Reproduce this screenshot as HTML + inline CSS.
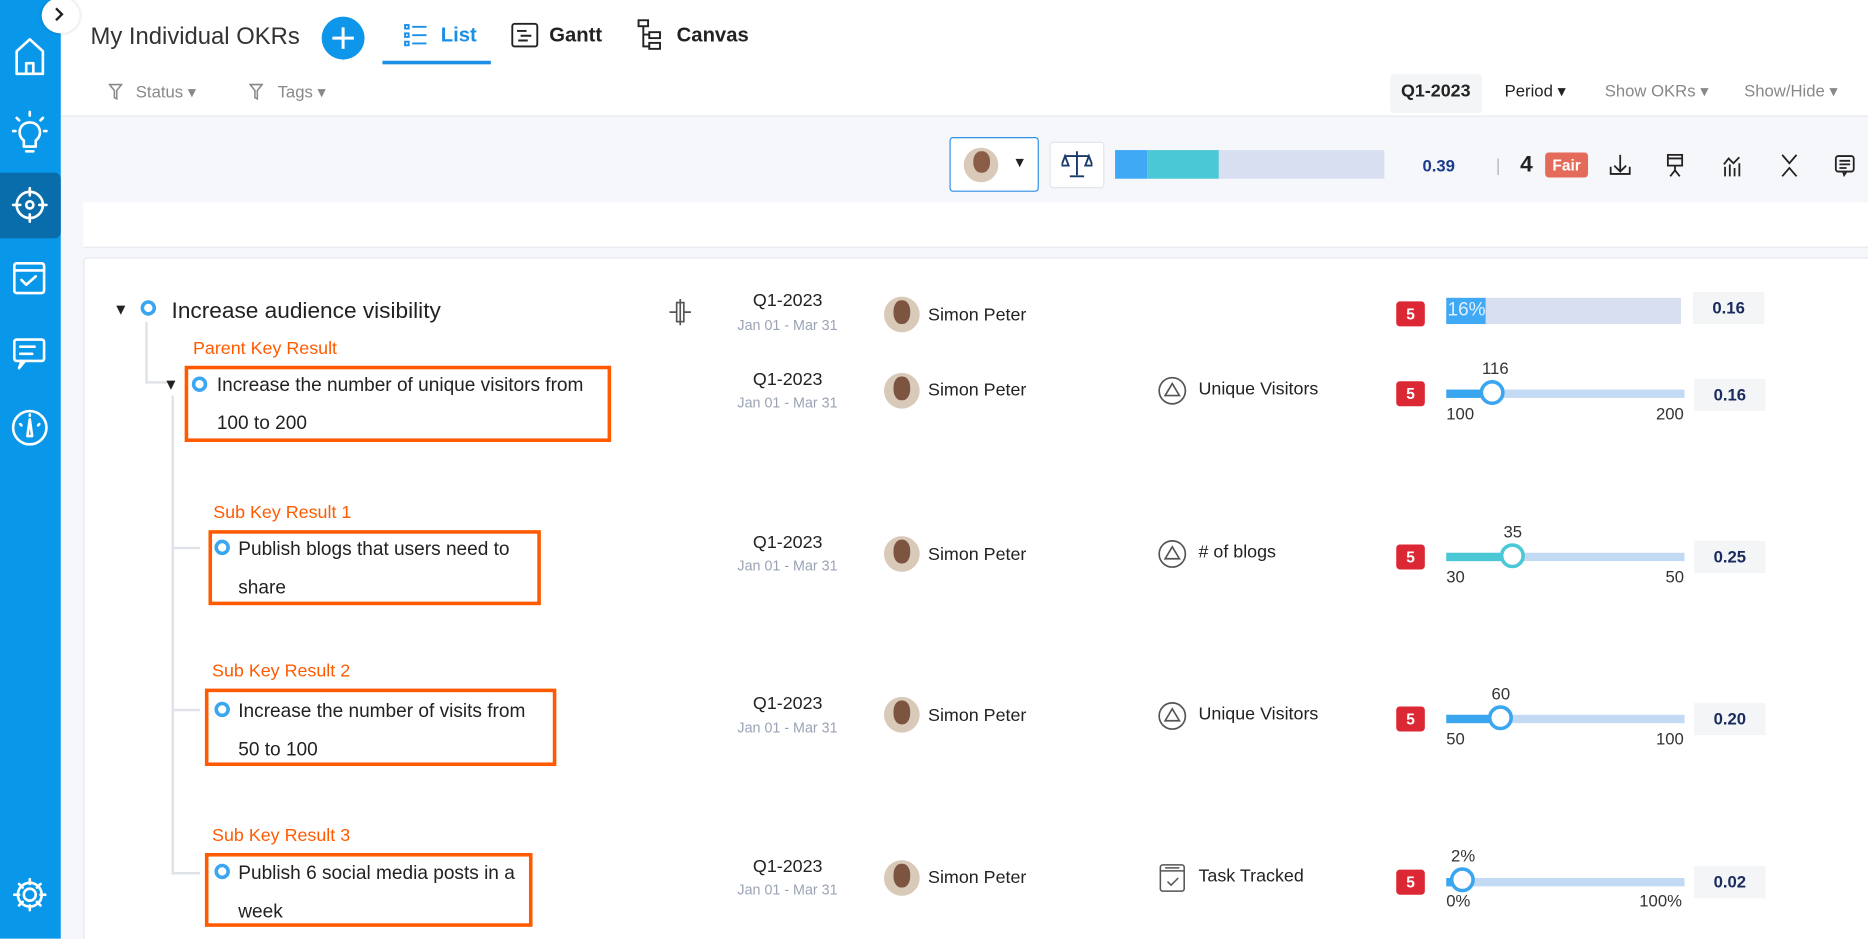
<!DOCTYPE html>
<html><head><meta charset="utf-8">
<style>
*{margin:0;padding:0;box-sizing:border-box}
html,body{width:1868px;height:939px;overflow:hidden;background:#fff}
#s{position:absolute;left:0;top:0;width:1568px;height:788px;transform:scale(1.19133);transform-origin:0 0;font-family:"Liberation Sans",sans-serif;color:#222;background:#f6f7fa;overflow:hidden}
.a{position:absolute}
.sb{left:0;top:0;width:51px;height:788px;background:#0897e9}
.t{white-space:nowrap}
.q{font-size:15px;color:#222}
.d{font-size:12px;color:#9aa3b5}
.nm{font-size:15px;color:#222}
.b5{width:24px;height:21px;background:#dc2834;border-radius:3px;color:#fff;font-weight:bold;font-size:13px;text-align:center;line-height:21px}
.vb{width:60px;height:27px;background:#f4f5f7;font-weight:bold;font-size:14px;color:#1a2b5e;text-align:center;line-height:27px}
.lbl{font-size:15px;color:#ff5a00}
.box{border:3px solid #ff5a00}
.kt{font-size:16px;color:#222}
.dot{width:13px;height:13px;border-radius:50%;border:3.5px solid #3aa6f0;background:#fff}
.trk{height:7px;background:#c2daf3}
.sm{font-size:14px;color:#333}
</style></head><body><div id="s">
<div class="a" style="left:51px;top:0;width:1517px;height:98px;background:#fff;border-bottom:1px solid #e4e7ee"></div>
<div class="a sb"></div>
<div class="a" style="left:0;top:145px;width:51px;height:55px;background:#0a6dab;border-radius:0 5px 5px 0"></div>
<div class="a" style="left:35px;top:-2px;width:32px;height:30px;border-radius:50%;background:#fff;box-shadow:0 0 3px rgba(0,0,0,.2)"></div>
<svg class="a" style="left:44px;top:5px" width="12" height="14"><path d="M3 2l5 5-5 5" stroke="#222" stroke-width="2" fill="none"/></svg>
<svg class="a" style="left:0;top:0" width="51" height="788" fill="none" stroke="#fff" stroke-width="2.2" stroke-linecap="round" stroke-linejoin="round">
<path d="M14 43l11-10 11 10v19H14z M22 62v-9h6v9"/>
<path d="M25 97v-3 M16 101l-2-2 M34 101l2-2 M13 110h-2 M37 110h2 M20 118c-4-3-5-9-1-13 3-3 9-3 12 0 4 4 3 10-1 13v5h-10z M22 127h6"/>
<circle cx="25" cy="172" r="11"/><circle cx="25" cy="172" r="3"/><path d="M25 158v6 M25 180v6 M11 172h6 M33 172h6"/>
<rect x="12" y="221" width="25" height="25" rx="2"/><path d="M12 227h25 M18 235l4 4 8-7"/>
<rect x="12" y="285" width="25" height="18" rx="2"/><path d="M17 291h12 M17 297h10 M18 303l-2 6 5-6"/>
<circle cx="25" cy="359" r="14"/><path d="M25 352l-2 14h4z M17 356l1 1 M33 356l-1 1 M25 348v1"/>
<circle cx="25" cy="751" r="5"/><path d="M25 738v4 M25 760v4 M12 751h4 M34 751h4 M16 742l3 3 M31 757l3 3 M34 742l-3 3 M16 760l3-3"/><circle cx="25" cy="751" r="10"/>
</svg>
<div class="a t" style="left:76px;top:20px;font-size:20px;color:#333">My Individual OKRs</div>
<div class="a" style="left:270px;top:14px;width:36px;height:36px;border-radius:50%;background:#0d96ea"></div>
<svg class="a" style="left:270px;top:14px" width="36" height="36"><path d="M18 9v18M9 18h18" stroke="#fff" stroke-width="2.5"/></svg>
<svg class="a" style="left:338px;top:19px" width="22" height="20" fill="none" stroke="#1b8fe6" stroke-width="1.6"><rect x="2" y="2" width="3" height="3"/><rect x="2" y="9" width="3" height="3"/><rect x="2" y="16" width="3" height="3"/><path d="M8 3.5h12M8 10.5h12M8 17.5h12"/></svg>
<div class="a t" style="left:370px;top:20px;font-size:17px;color:#1b8fe6;font-weight:bold">List</div>
<div class="a" style="left:321px;top:51px;width:91px;height:3px;background:#1b8fe6"></div>
<svg class="a" style="left:429px;top:19px" width="24" height="22" fill="none" stroke="#222" stroke-width="1.6"><rect x="1" y="1" width="21" height="19" rx="2"/><path d="M5 7h8M8 11h9M6 15h8"/></svg>
<div class="a t" style="left:461px;top:20px;font-size:17px;font-weight:bold;color:#222">Gantt</div>
<svg class="a" style="left:535px;top:16px" width="24" height="27" fill="none" stroke="#222" stroke-width="1.6"><rect x="1" y="1" width="8" height="5"/><rect x="10" y="11" width="9" height="5"/><rect x="10" y="20" width="9" height="5"/><path d="M5 6v17h5M5 13h5"/></svg>
<div class="a t" style="left:568px;top:20px;font-size:17px;font-weight:bold;color:#222">Canvas</div>
<svg class="a" style="left:91px;top:70px" width="12" height="14" fill="none" stroke="#888" stroke-width="1.3"><path d="M1 1h10L7 6v7L5 12V6z"/></svg>
<div class="a t" style="left:114px;top:69px;font-size:14px;color:#888">Status ▾</div>
<svg class="a" style="left:209px;top:70px" width="12" height="14" fill="none" stroke="#888" stroke-width="1.3"><path d="M1 1h10L7 6v7L5 12V6z"/></svg>
<div class="a t" style="left:233px;top:69px;font-size:14px;color:#888">Tags ▾</div>
<div class="a" style="left:1167px;top:62px;width:77px;height:33px;background:#f4f5f7;border-radius:3px"></div>
<div class="a t" style="left:1176px;top:68px;font-size:15px;font-weight:bold;color:#222">Q1-2023</div>
<div class="a t" style="left:1263px;top:68px;font-size:14px;color:#222">Period ▾</div>
<div class="a t" style="left:1347px;top:68px;font-size:14px;color:#888">Show OKRs ▾</div>
<div class="a t" style="left:1464px;top:68px;font-size:14px;color:#888">Show/Hide ▾</div>
<div class="a" style="left:70px;top:170px;width:1498px;height:38px;background:#fff;border-bottom:1px solid #e4e7ee"></div>
<div class="a" style="left:797px;top:115px;width:75px;height:46px;border:1px solid #2d8fe6;border-radius:3px;background:#fff"></div>
<div class="a" style="left:809px;top:124px;width:29px;height:29px;border-radius:50%;background:#d9c9b8"></div>
<div class="a" style="left:817px;top:127px;width:14px;height:18px;border-radius:45%;background:#8a5e46"></div>
<div class="a t" style="left:850px;top:129px;font-size:12px">▼</div>
<div class="a" style="left:881px;top:119px;width:46px;height:39px;border:1px solid #e2e5ec;border-radius:3px;background:#fff"></div>
<svg class="a" style="left:891px;top:125px" width="26" height="26" fill="none" stroke="#1a3a6b" stroke-width="1.6"><path d="M13 2v20M7 23h12M3 6h20M3 6l-3 8h6zM23 6l-3 8h6z"/></svg>
<div class="a" style="left:936px;top:126px;width:226px;height:24px;background:#d8dff0"></div>
<div class="a" style="left:936px;top:126px;width:27px;height:24px;background:#3fa9f5"></div>
<div class="a" style="left:963px;top:126px;width:60px;height:24px;background:#4ac8d6"></div>
<div class="a t" style="left:1194px;top:131px;font-size:14px;font-weight:bold;color:#1a3a8b">0.39</div>
<div class="a" style="left:1257px;top:133px;width:1px;height:14px;background:#aab"></div>
<div class="a t" style="left:1276px;top:128px;font-size:19px;font-weight:bold;color:#222">4</div>
<div class="a t" style="left:1297px;top:128px;width:36px;height:21px;background:#e46a5a;border-radius:3px;color:#fff;font-weight:bold;font-size:13px;text-align:center;line-height:21px">Fair</div>
<svg class="a" style="left:1348px;top:126px" width="215" height="26" fill="none" stroke="#222" stroke-width="1.5">
<path d="M4 14v6h16v-6 M12 4v14 M7 13l5 5 5-5"/>
<rect x="52" y="4" width="12" height="9"/><path d="M52 7h12 M58 13v4 M54 22l4-5 4 5"/>
<path d="M100 22v-8 M104 22v-10 M108 22v-7 M112 22v-11 M99 12l4-5 4 4 5-5"/>
<path d="M148 4l6 7 6-7 M148 22l6-7 6 7"/>
<rect x="193" y="5" width="15" height="13" rx="2"/><path d="M196 9h9 M196 12h9 M196 15h6 M199 18l1 3 2-3"/>
</svg>
<div class="a" style="left:70px;top:216px;width:1520px;height:600px;background:#fff;border:1px solid #e4e7ee;border-radius:3px"></div>
<div class="a" style="left:122px;top:270px;width:2px;height:52px;background:#dfe2e8"></div>
<div class="a" style="left:122px;top:320px;width:20px;height:2px;background:#dfe2e8"></div>
<div class="a" style="left:144px;top:332px;width:2px;height:402px;background:#dfe2e8"></div>
<div class="a" style="left:144px;top:459px;width:24px;height:2px;background:#dfe2e8"></div>
<div class="a" style="left:144px;top:595px;width:24px;height:2px;background:#dfe2e8"></div>
<div class="a" style="left:144px;top:732px;width:24px;height:2px;background:#dfe2e8"></div>
<div class="a t" style="left:95px;top:252px;font-size:13px">▼</div>
<div class="a dot" style="left:118px;top:252px"></div>
<div class="a t" style="left:144px;top:251px;font-size:19px;color:#222">Increase audience visibility</div>
<svg class="a" style="left:561px;top:250px" width="20" height="24" fill="none" stroke="#555" stroke-width="1.4"><rect x="7" y="4" width="6" height="16"/><path d="M10 1v22 M1 12h6 M13 12h6"/></svg>
<div class="a t q" style="left:632px;top:244px">Q1-2023</div><div class="a t d" style="left:619px;top:266px">Jan 01 - Mar 31</div>
<div class="a" style="left:742px;top:249px;width:30px;height:30px;border-radius:50%;background:#d9c9b8"></div><div class="a" style="left:750px;top:252px;width:14px;height:20px;border-radius:45%;background:#7d5440"></div>
<div class="a t nm" style="left:779px;top:256px">Simon Peter</div>
<div class="a b5" style="left:1172px;top:253px">5</div>
<div class="a" style="left:1214px;top:250px;width:197px;height:22px;background:#d8dff0"></div>
<div class="a" style="left:1214px;top:250px;width:33px;height:22px;background:#3fa9f5"></div>
<div class="a t" style="left:1215px;top:252px;font-size:16px;color:#e0f0ff">16%</div>
<div class="a vb" style="left:1421px;top:245px">0.16</div>

<div class="a t lbl" style="left:162px;top:284px">Parent Key Result</div>
<div class="a box" style="left:155px;top:307px;width:358px;height:64px"></div>
<div class="a t" style="left:137px;top:315px;font-size:13px">▼</div>
<div class="a dot" style="left:161px;top:316px"></div>
<div class="a t kt" style="left:182px;top:315px">Increase the number of unique visitors from</div>
<div class="a t kt" style="left:182px;top:347px">100 to 200</div>
<div class="a t q" style="left:632px;top:310px">Q1-2023</div><div class="a t d" style="left:619px;top:331px">Jan 01 - Mar 31</div>
<div class="a" style="left:742px;top:313px;width:30px;height:30px;border-radius:50%;background:#d9c9b8"></div><div class="a" style="left:750px;top:316px;width:14px;height:20px;border-radius:45%;background:#7d5440"></div>
<div class="a t nm" style="left:779px;top:319px">Simon Peter</div>
<svg class="a" style="left:972px;top:316px" width="24" height="24" fill="none" stroke="#555" stroke-width="1.4"><circle cx="12" cy="12" r="11"/><path d="M12 6l-6 10h12z"/></svg>
<div class="a t nm" style="left:1006px;top:318px">Unique Visitors</div>
<div class="a b5" style="left:1172px;top:320px">5</div>
<div class="a t sm" style="left:1244px;top:301px">116</div>
<div class="a trk" style="left:1214px;top:327px;width:200px"></div>
<div class="a trk" style="left:1214px;top:327px;width:38px;background:#3aa6f0"></div>
<div class="a" style="left:1242px;top:319px;width:21px;height:21px;border-radius:50%;border:3.5px solid #3aa6f0;background:#fff"></div>
<div class="a t sm" style="left:1214px;top:339px">100</div><div class="a t sm" style="left:1390px;top:339px">200</div>
<div class="a vb" style="left:1422px;top:318px">0.16</div>

<div class="a t lbl" style="left:179px;top:422px">Sub Key Result 1</div>
<div class="a box" style="left:175px;top:445px;width:279px;height:63px"></div>
<div class="a dot" style="left:180px;top:453px"></div>
<div class="a t kt" style="left:200px;top:453px">Publish blogs that users need to</div>
<div class="a t kt" style="left:200px;top:485px">share</div>
<div class="a t q" style="left:632px;top:447px">Q1-2023</div><div class="a t d" style="left:619px;top:468px">Jan 01 - Mar 31</div>
<div class="a" style="left:742px;top:450px;width:30px;height:30px;border-radius:50%;background:#d9c9b8"></div><div class="a" style="left:750px;top:453px;width:14px;height:20px;border-radius:45%;background:#7d5440"></div>
<div class="a t nm" style="left:779px;top:457px">Simon Peter</div>
<svg class="a" style="left:972px;top:453px" width="24" height="24" fill="none" stroke="#555" stroke-width="1.4"><circle cx="12" cy="12" r="11"/><path d="M12 6l-6 10h12z"/></svg>
<div class="a t nm" style="left:1006px;top:455px">&#35; of blogs</div>
<div class="a b5" style="left:1172px;top:457px">5</div>
<div class="a t sm" style="left:1262px;top:438px">35</div>
<div class="a trk" style="left:1214px;top:464px;width:200px"></div>
<div class="a trk" style="left:1214px;top:464px;width:56px;background:#4ac8d6"></div>
<div class="a" style="left:1259px;top:456px;width:21px;height:21px;border-radius:50%;border:3.5px solid #4ac8d6;background:#fff"></div>
<div class="a t sm" style="left:1214px;top:476px">30</div><div class="a t sm" style="left:1398px;top:476px">50</div>
<div class="a vb" style="left:1422px;top:454px">0.25</div>

<div class="a t lbl" style="left:178px;top:555px">Sub Key Result 2</div>
<div class="a box" style="left:172px;top:578px;width:295px;height:65px"></div>
<div class="a dot" style="left:180px;top:589px"></div>
<div class="a t kt" style="left:200px;top:589px">Increase the number of visits from</div>
<div class="a t kt" style="left:200px;top:621px">50 to 100</div>
<div class="a t q" style="left:632px;top:582px">Q1-2023</div><div class="a t d" style="left:619px;top:604px">Jan 01 - Mar 31</div>
<div class="a" style="left:742px;top:585px;width:30px;height:30px;border-radius:50%;background:#d9c9b8"></div><div class="a" style="left:750px;top:588px;width:14px;height:20px;border-radius:45%;background:#7d5440"></div>
<div class="a t nm" style="left:779px;top:592px">Simon Peter</div>
<svg class="a" style="left:972px;top:589px" width="24" height="24" fill="none" stroke="#555" stroke-width="1.4"><circle cx="12" cy="12" r="11"/><path d="M12 6l-6 10h12z"/></svg>
<div class="a t nm" style="left:1006px;top:591px">Unique Visitors</div>
<div class="a b5" style="left:1172px;top:593px">5</div>
<div class="a t sm" style="left:1252px;top:574px">60</div>
<div class="a trk" style="left:1214px;top:600px;width:200px"></div>
<div class="a trk" style="left:1214px;top:600px;width:46px;background:#3aa6f0"></div>
<div class="a" style="left:1249px;top:592px;width:21px;height:21px;border-radius:50%;border:3.5px solid #3aa6f0;background:#fff"></div>
<div class="a t sm" style="left:1214px;top:612px">50</div><div class="a t sm" style="left:1390px;top:612px">100</div>
<div class="a vb" style="left:1422px;top:590px">0.20</div>

<div class="a t lbl" style="left:178px;top:693px">Sub Key Result 3</div>
<div class="a box" style="left:172px;top:716px;width:275px;height:62px"></div>
<div class="a dot" style="left:180px;top:725px"></div>
<div class="a t kt" style="left:200px;top:725px">Publish 6 social media posts in a</div>
<div class="a t kt" style="left:200px;top:757px">week</div>
<div class="a t q" style="left:632px;top:719px">Q1-2023</div><div class="a t d" style="left:619px;top:740px">Jan 01 - Mar 31</div>
<div class="a" style="left:742px;top:722px;width:30px;height:30px;border-radius:50%;background:#d9c9b8"></div><div class="a" style="left:750px;top:725px;width:14px;height:20px;border-radius:45%;background:#7d5440"></div>
<div class="a t nm" style="left:779px;top:728px">Simon Peter</div>
<svg class="a" style="left:972px;top:725px" width="24" height="24" fill="none" stroke="#555" stroke-width="1.3"><rect x="2" y="1" width="20" height="22" rx="2"/><path d="M2 6h20 M6 3.5h12 M8 15l3 3 6-6"/></svg>
<div class="a t nm" style="left:1006px;top:727px">Task Tracked</div>
<div class="a b5" style="left:1172px;top:730px">5</div>
<div class="a t sm" style="left:1218px;top:710px">2%</div>
<div class="a trk" style="left:1214px;top:737px;width:200px"></div>
<div class="a trk" style="left:1214px;top:737px;width:10px;background:#3aa6f0"></div>
<div class="a" style="left:1217px;top:728px;width:21px;height:21px;border-radius:50%;border:3.5px solid #3aa6f0;background:#fff"></div>
<div class="a t sm" style="left:1214px;top:748px">0%</div><div class="a t sm" style="left:1376px;top:748px">100%</div>
<div class="a vb" style="left:1422px;top:727px">0.02</div>
</div></body></html>
